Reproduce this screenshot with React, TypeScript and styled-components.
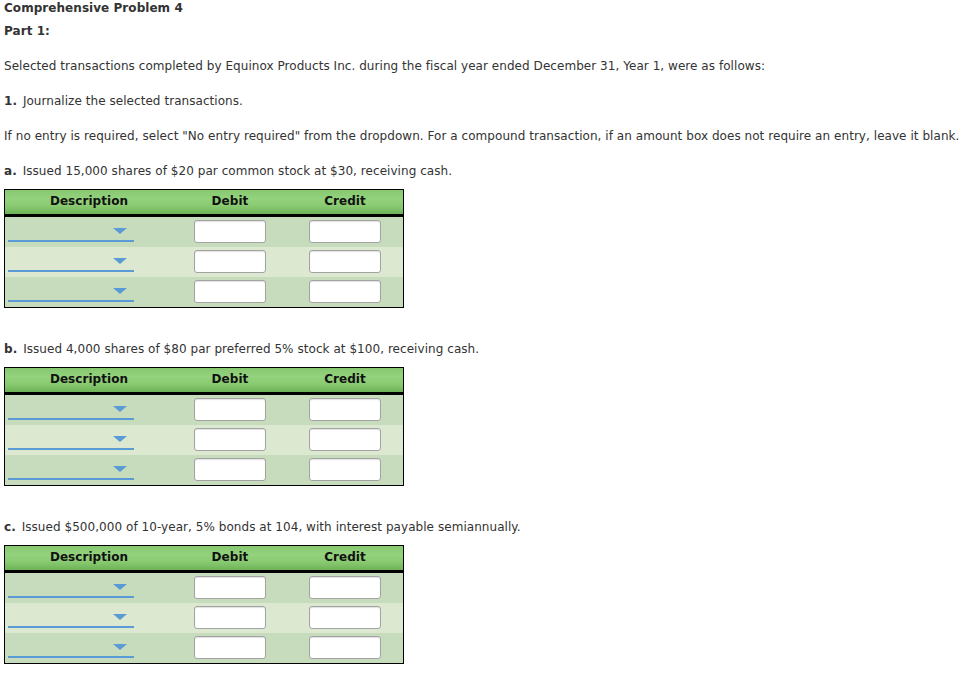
import React from 'react';
import styled, { createGlobalStyle } from 'styled-components';

const GlobalStyle = createGlobalStyle`
  body {
    margin: 0;
    background: #ffffff;
    font-family: Verdana, "DejaVu Sans", sans-serif;
    font-size: 12px;
    letter-spacing: 0.05px;
    color: #333333;
  }
`;

const Page = styled.div`
  padding: 1px 4px 0 4px;
`;

const Title = styled.div`
  font-weight: 700;
  line-height: 15px;
`;

const Line = styled.p<{ $top?: number; $bold?: boolean }>`
  margin: ${({ $top }) => ($top ?? 20)}px 0 0 0;
  line-height: 15px;
  font-weight: ${({ $bold }) => ($bold ? 700 : 400)};
`;

const Label = styled.b`
  font-weight: 700;
  margin-right: 2px;
`;

const Journal = styled.div`
  margin-top: 10px;
  width: 400px;
  box-sizing: border-box;
  border: 1px solid #000000;
`;

const HeaderRow = styled.div`
  display: grid;
  grid-template-columns: 168px 114px 116px;
  height: 24px;
  align-items: center;
  background: linear-gradient(to bottom, #86c870 0%, #94d27d 35%, #8acb72 65%, #6db257 100%);
  border-bottom: 3px solid #000000;
  font-weight: 700;
  color: #111111;
  text-align: center;
`;

const HeaderCell = styled.div`
  line-height: 15px;
`;

const EntryRow = styled.div<{ $light?: boolean }>`
  display: grid;
  grid-template-columns: 168px 114px 116px;
  height: 30px;
  background: ${({ $light }) => ($light ? '#dde8d1' : '#c6dcbd')};
`;

const SelectCell = styled.div`
  position: relative;
`;

const SelectLine = styled.div`
  position: absolute;
  left: 3px;
  top: 23px;
  width: 126px;
  height: 2px;
  background: #5b9bd5;
`;

const Caret = styled.div`
  position: absolute;
  left: 108px;
  top: 11px;
  width: 0;
  height: 0;
  border-left: 7px solid transparent;
  border-right: 7px solid transparent;
  border-top: 6px solid #5b9bd5;
`;

const AmountCell = styled.div`
  display: flex;
  justify-content: center;
  padding-top: 3px;
`;

const AmountInput = styled.input`
  box-sizing: border-box;
  width: 72px;
  height: 23px;
  border: 1px solid #a3a3a3;
  border-radius: 3px;
  background: #ffffff;
  box-shadow: inset 0 1px 1px rgba(0, 0, 0, 0.12);
  outline: none;
  padding: 0 4px;
  font-family: inherit;
  font-size: 12px;
`;

const Entry: React.FC<{ light?: boolean }> = ({ light }) => (
  <EntryRow $light={light}>
    <SelectCell>
      <Caret />
      <SelectLine />
    </SelectCell>
    <AmountCell>
      <AmountInput type="text" />
    </AmountCell>
    <AmountCell>
      <AmountInput type="text" />
    </AmountCell>
  </EntryRow>
);

const JournalTable: React.FC = () => (
  <Journal>
    <HeaderRow>
      <HeaderCell>Description</HeaderCell>
      <HeaderCell>Debit</HeaderCell>
      <HeaderCell>Credit</HeaderCell>
    </HeaderRow>
    <Entry />
    <Entry light />
    <Entry />
  </Journal>
);

const transactions = [
  { key: 'a.', text: 'Issued 15,000 shares of $20 par common stock at $30, receiving cash.' },
  { key: 'b.', text: 'Issued 4,000 shares of $80 par preferred 5% stock at $100, receiving cash.' },
  { key: 'c.', text: 'Issued $500,000 of 10-year, 5% bonds at 104, with interest payable semiannually.' },
];

export default function App() {
  return (
    <Page>
      <GlobalStyle />
      <Title>Comprehensive Problem 4</Title>
      <Line $top={7.5} $bold>
        Part 1:
      </Line>
      <Line>
        Selected transactions completed by Equinox Products Inc. during the fiscal year ended December 31, Year 1, were as follows:
      </Line>
      <Line>
        <Label>1.</Label> Journalize the selected transactions.
      </Line>
      <Line>
        If no entry is required, select "No entry required" from the dropdown. For a compound transaction, if an amount box does not require an entry, leave it blank.
      </Line>
      {transactions.map((t, i) => (
        <React.Fragment key={t.key}>
          <Line $top={i === 0 ? 20 : 34}>
            <Label>{t.key}</Label> {t.text}
          </Line>
          <JournalTable />
        </React.Fragment>
      ))}
    </Page>
  );
}
